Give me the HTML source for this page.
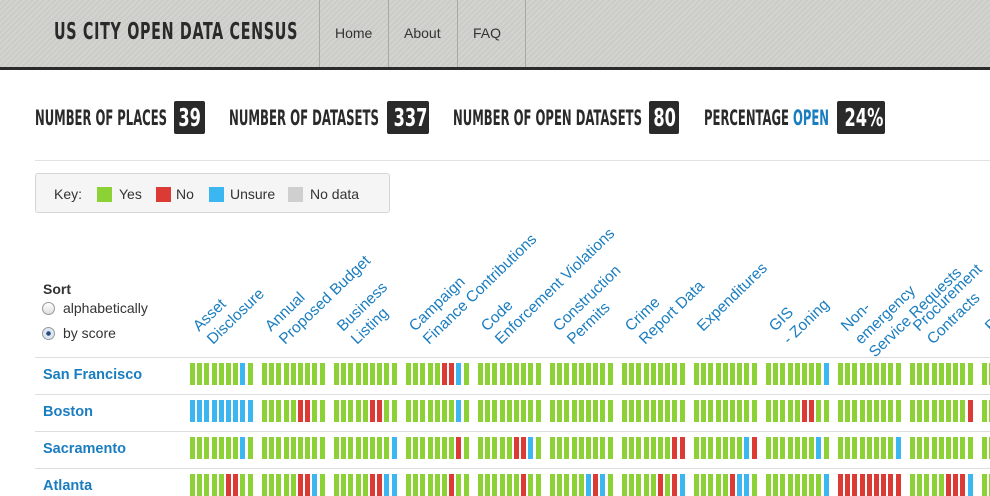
<!DOCTYPE html>
<html><head><meta charset="utf-8"><style>
*{margin:0;padding:0;box-sizing:border-box}
body{width:990px;height:495px;overflow:hidden;background:#fff;font-family:"Liberation Sans",Helvetica,Arial,sans-serif;position:relative}
.hdr{position:absolute;left:0;top:0;width:990px;height:70px;background:repeating-linear-gradient(135deg,#d3d3d0 0 2px,#cbcbc7 2px 4px);border-bottom:3px solid #2b2b2b}
.title{position:absolute;left:54px;top:19px;font-family:"DejaVu Sans Condensed","Liberation Sans",sans-serif;font-weight:bold;font-size:23px;color:#2a2a2a;letter-spacing:1px;transform:scaleX(0.69);transform-origin:left;white-space:nowrap}
.nav{position:absolute;top:0;height:67px;border-left:1px solid #a8a8a5;font-size:14px;color:#333;padding:25px 0 0 15px}
.stat{position:absolute;top:106px;font-family:"DejaVu Sans Condensed","Liberation Sans",sans-serif;font-weight:bold;font-size:21px;color:#2a2a2a;transform-origin:left;white-space:nowrap;line-height:24px}
.box{position:absolute;top:101px;height:33px;background:#2a2a2a;color:#fff;border-radius:2px;font-family:"DejaVu Sans Condensed","Liberation Sans",sans-serif;font-weight:bold;font-size:25px;line-height:33px;text-align:center;overflow:hidden}
.box i{font-style:normal;display:inline-block;transform:scaleX(0.72)}
.hr{position:absolute;left:35px;top:160px;width:955px;height:1px;background:#e2e2e2}
.key{position:absolute;left:35px;top:173px;width:355px;height:40px;border:1px solid #d5d5d5;background:#f5f5f5;border-radius:3px;font-size:14px;color:#333}
.key span{position:absolute;top:12px}
.sw{position:absolute;top:13px;width:15px;height:15px}
.sort{position:absolute;left:43px;top:281px;font-size:14px;color:#333}
.rad{position:absolute;left:42px;width:13px;height:13px;border:1px solid #999;border-radius:50%;background:linear-gradient(#fff,#ddd)}
.rowline{position:absolute;left:35px;width:955px;height:1px;background:#ddd}
.city{position:absolute;left:43px;font-size:14.5px;font-weight:bold;color:#1a7dbf}
.bar{position:absolute;width:5px;height:22px}
</style></head><body>
<div class="hdr">
<div class="title">US CITY OPEN DATA CENSUS</div>
<div class="nav" style="left:319px;width:69px">Home</div>
<div class="nav" style="left:388px;width:69px">About</div>
<div class="nav" style="left:457px;width:69px;border-right:1px solid #a8a8a5">FAQ</div>
</div>
<div class="stat" id="s1" style="left:35px">NUMBER OF PLACES</div>
<div class="stat" id="s2" style="left:229px">NUMBER OF DATASETS</div>
<div class="stat" id="s3" style="left:453px">NUMBER OF OPEN DATASETS</div>
<div class="stat" id="s4" style="left:704px">PERCENTAGE <span style="color:#1a7dbf">OPEN</span></div>
<div class="box" style="left:174px;width:31px"><i>39</i></div>
<div class="box" style="left:387px;width:42px"><i>337</i></div>
<div class="box" style="left:649px;width:30px"><i>80</i></div>
<div class="box" style="left:837px;width:48px"><i>24%</i></div>
<div class="hr"></div>
<div class="key">
<span style="left:18px">Key:</span>
<div class="sw" style="left:61px;background:#8cd136"></div><span style="left:83px">Yes</span>
<div class="sw" style="left:120px;background:#dc3b35"></div><span style="left:140px">No</span>
<div class="sw" style="left:173px;background:#3cb6f0"></div><span style="left:194px">Unsure</span>
<div class="sw" style="left:252px;background:#cfcfcf"></div><span style="left:274px">No data</span>
</div>
<div class="sort" style="font-weight:bold">Sort</div>
<div class="rad" style="top:302px"></div><div class="sort" style="left:63px;top:300px">alphabetically</div>
<div class="rad" style="top:327px;background:radial-gradient(#2a4a7a 0 2px,#dde8f5 2.5px)"></div><div class="sort" style="left:63px;top:325px">by score</div>
<svg style="position:absolute;left:0;top:0" width="990" height="495" font-family="Liberation Sans,Helvetica,Arial,sans-serif" font-size="15.5" fill="#1a7dbf" id="hd"></svg>
<div id="rows"></div>
<script>
[["s1",132],["s2",150],["s3",189],["s4",125]].forEach(function(a){var e=document.getElementById(a[0]);var w=e.getBoundingClientRect().width;e.style.transform="scaleX("+(a[1]/w)+")";});
var H=[["Asset","Disclosure"],["Annual","Proposed Budget"],["Business","Listing"],["Campaign","Finance Contributions"],["Code","Enforcement Violations"],["Construction","Permits"],["Crime","Report Data"],["Expenditures",""],["GIS","- Zoning"],["Non-","emergency","Service Requests"],["Procurement","Contracts"],["P",""]];
var s="";
H.forEach(function(h,k){var x=199+72*k;h.forEach(function(t,i){if(!t)return;var X=x+i*14,Y=332+i*13;s+='<text transform="translate('+X+','+Y+') rotate(-44)">'+t+'</text>';});});
document.getElementById("hd").innerHTML=s;
var C={G:"#8cd136",R:"#dc3b35",B:"#3cb6f0"};
var R=[["San Francisco",["GGGGGGGBG","GGGGGGGGG","GGGGGGGGG","GGGGGRRBG","GGGGGGGGG","GGGGGGGGG","GGGGGGGGG","GGGGGGGGG","GGGGGGGGB","GGGGGGGGG","GGGGGGGGG","GGGGGGGGG"]],
["Boston",["BBBBBBBBB","GGGGGRRGG","GGGGGRRGG","GGGGGGGBG","GGGGGGGGG","GGGGGGGGG","GGGGGGGGG","GGGGGGGGG","GGGGGRRGG","GGGGGGGGG","GGGGGGGGR","GGGGGGGGG"]],
["Sacramento",["GGGGGGGBG","GGGGGGGGG","GGGGGGGGB","GGGGGGGRG","GGGGGRRBG","GGGGGGGGG","GGGGGGGRR","GGGGGGGBR","GGGGGGGBG","GGGGGGGGB","GGGGGGGGG","GGGGGGGGG"]],
["Atlanta",["GGGGGRRGG","GGGGGRRBG","GGGGGRRBB","GGGGGGRGG","GGGGGGRGG","GGGGGBRBG","GGGGGRGRB","GGGGGRBBG","GGGGGGGGB","RRRRRRRRR","GGGGGRRRB","GGGGGGGGG"]]];
var o="";
R.forEach(function(r,i){var y=357+37*i;o+='<div class="rowline" style="top:'+y+'px"></div><div class="city" style="top:'+(y+10)+'px">'+r[0]+'</div>';
r[1].forEach(function(g,k){for(var j=0;j<9;j++){var x=190+72*k+j*7.2;if(x>990)break;o+='<div class="bar" style="left:'+x.toFixed(1)+'px;top:'+(y+6)+'px;background:'+C[g[j]]+'"></div>';}});});
document.getElementById("rows").innerHTML=o;
</script>
</body></html>
